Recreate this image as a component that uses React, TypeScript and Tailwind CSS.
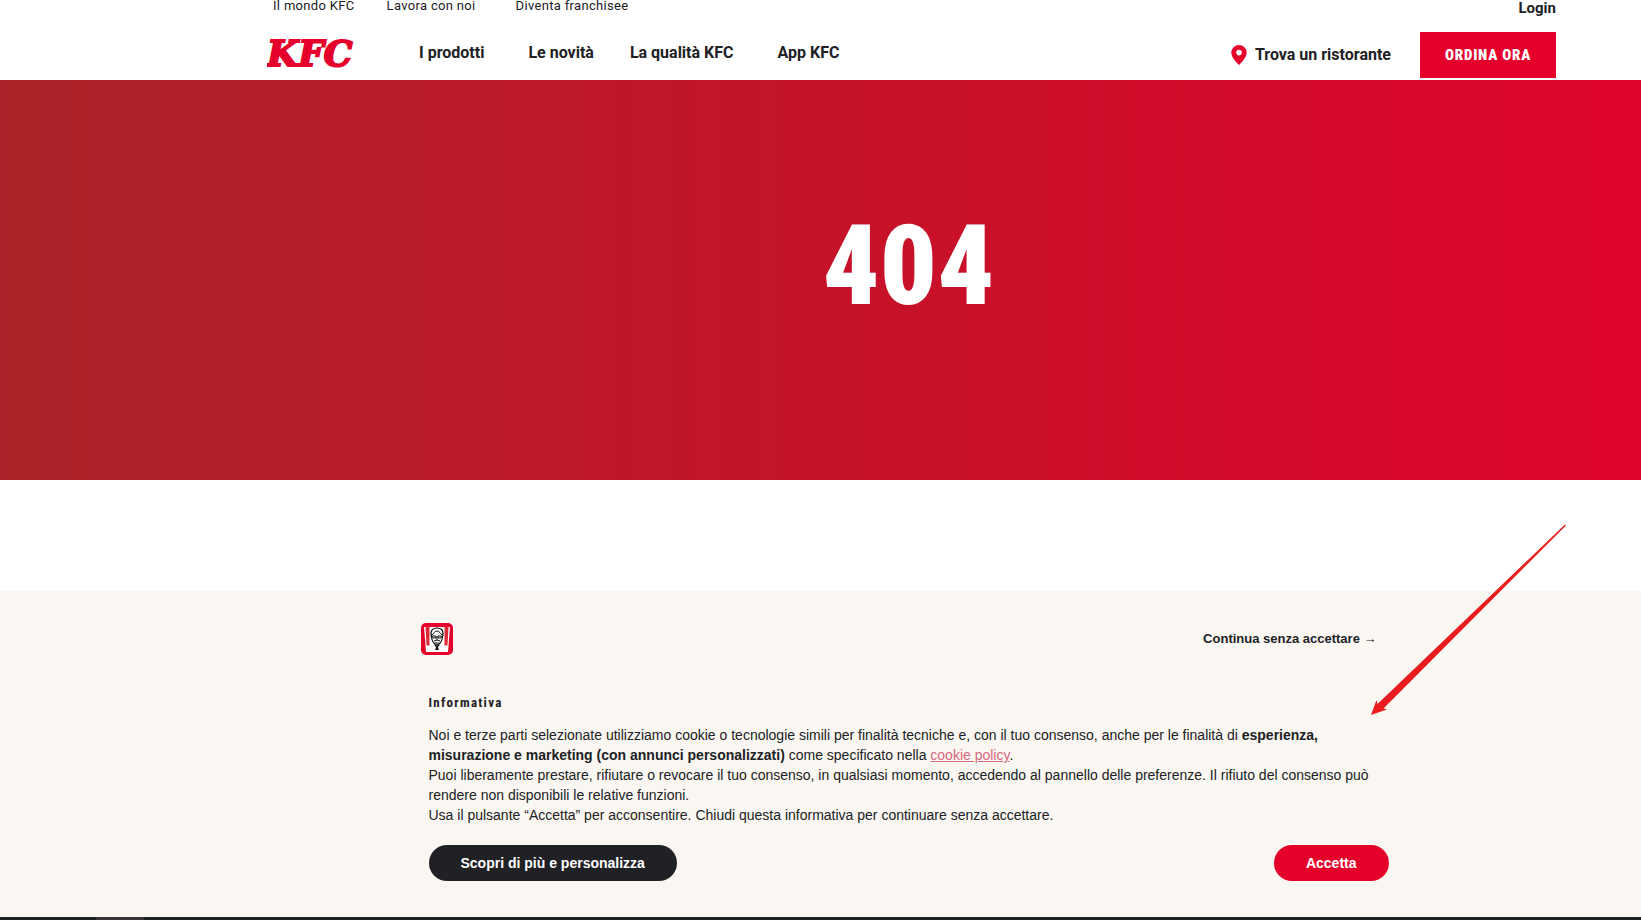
const topLinks = ["Il mondo KFC", "Lavora con noi", "Diventa franchisee"];

function Pin() {
  return (
    <svg width="16" height="20" viewBox="0 0 16 20" aria-hidden="true">
      <path
        fill="#e4002b"
        fillRule="evenodd"
        d="M8 0a7.700 7.700 0 0 1 7.700 7.700C15.700 13 8 20 8 20S.3 13 .3 7.700A7.700 7.700 0 0 1 8 0Zm0 4.800a2.800 2.800 0 1 0 0 5.600 2.800 2.800 0 0 0 0-5.600Z"
      />
    </svg>
  );
}

function Logo() {
  return (
    <svg width="90" height="32" viewBox="0 0 90 32" role="img" aria-label="KFC">
      <text
        x="0"
        y="29"
        fill="#e4002b"
        stroke="#e4002b"
        strokeWidth="2"
        className="font-['DejaVu_Serif',serif] text-[36px] font-bold italic"
      >
        KFC
      </text>
    </svg>
  );
}

function BucketIcon() {
  return (
    <svg width="32" height="32" viewBox="0 0 32 32" aria-hidden="true">
      <rect width="32" height="32" rx="5" fill="#e4002b" />
      <path d="M3 4h26l-2 25H5Z" fill="#fff" />
      <path d="M4.500 4h4v18.500h-3ZM23.500 4h4l-1 18.500h-3Z" fill="#dd2a38" />
      <path
        d="M10.500 14C9 8 11 5 16 5s7 3 5.500 9c-.5 4-2.500 7-5.500 8-3-1-5-4-5.500-8Z"
        fill="#fff"
        stroke="#111"
        strokeWidth="1.200"
      />
      <path
        d="M11 12c2-1 2-4 5-4s3 3 5.500 4M11.500 13h3.500v2h-3ZM17 13h3.500l-.5 2h-3ZM16 13v4M13 18l3-1 3 1M14 20h4"
        fill="none"
        stroke="#111"
        strokeWidth="1"
      />
      <path d="m12.500 21 3.500 1.500 3.500-1.500-2.500 3 .8 3h-3.600l.8-3Z" fill="#111" />
    </svg>
  );
}

function Header() {
  return (
    <header className="flex h-20 justify-between overflow-hidden bg-white pl-[267px] pr-[85px] text-[#202124]">
      <div className="-mt-1 flex flex-col">
        <nav className="flex gap-8 pl-1.5 text-[13px] leading-5 tracking-wide">
          {topLinks.map((label) => (
            <a key={label} href="#" className="last:ml-2">
              {label}
            </a>
          ))}
        </nav>
        <div className="mt-[21px] flex items-center">
          <a href="#">
            <Logo />
          </a>
          <nav className="ml-[62px] flex text-base font-bold">
            <a href="#">I prodotti</a>
            <a href="#" className="ml-11">Le novità</a>
            <a href="#" className="ml-9">La qualità KFC</a>
            <a href="#" className="ml-11">App KFC</a>
          </nav>
        </div>
      </div>
      <div className="-mt-1 flex flex-col items-end">
        <a href="#" className="text-[15px] font-bold leading-6">
          Login
        </a>
        <div className="mt-3 flex items-center">
          <a href="#" className="flex items-center gap-2 text-base font-bold">
            <Pin />
            <span>Trova un ristorante</span>
          </a>
          <button className="ml-[29px] h-[46px] w-[136px] bg-[#e4002b] font-['Roboto_Condensed',Roboto,sans-serif] text-[15px] font-black tracking-wider text-white">
            ORDINA ORA
          </button>
        </div>
      </div>
    </header>
  );
}

function CookieBanner() {
  return (
    <section className="bg-[#faf7f2] pb-9 pl-44 pt-8 font-['Liberation_Sans',Arial,sans-serif] text-[#202124]">
      <div className="mx-auto max-w-[960px]">
        <div className="-ml-2 flex items-center justify-between">
          <BucketIcon />
          <button className="h-8 bg-[#fbf8f4] px-3 text-[13px] font-bold">
            Continua senza accettare →
          </button>
        </div>
        <h2 className="mt-10 font-['Roboto_Condensed',Roboto,sans-serif] text-[13px] font-bold leading-4 tracking-widest">
          Informativa
        </h2>
        <p className="mt-3.5 text-sm leading-5">
          Noi e terze parti selezionate utilizziamo cookie o tecnologie simili per finalità tecniche e, con il tuo
          consenso, anche per le finalità di <b>esperienza, misurazione e marketing (con annunci personalizzati)</b> come
          specificato nella{" "}
          <a href="#" className="text-[#d8677f] underline">
            cookie policy
          </a>
          .<br />
          Puoi liberamente prestare, rifiutare o revocare il tuo consenso, in qualsiasi momento, accedendo al pannello
          delle preferenze. Il rifiuto del consenso può rendere non disponibili le relative funzioni.
          <br />
          Usa il pulsante “Accetta” per acconsentire. Chiudi questa informativa per continuare senza accettare.
        </p>
        <div className="mt-5 flex justify-between text-sm font-bold text-white">
          <button className="h-9 rounded-full bg-[#202124] px-8">Scopri di più e personalizza</button>
          <button className="h-9 rounded-full bg-[#e4002b] px-8">Accetta</button>
        </div>
      </div>
    </section>
  );
}

export default function App() {
  return (
    <div className="relative flex min-h-screen flex-col overflow-hidden bg-white font-[Roboto,sans-serif]">
      <Header />
      <main className="flex h-[400px] justify-center bg-linear-to-r/srgb from-[#ab2328] to-[#e4002b] to-110% pl-44 pt-[126px]">
        <h1 className="font-['Roboto_Condensed',Roboto,sans-serif] text-[112px] font-black leading-[120px] text-white">
          404
        </h1>
      </main>
      <div className="mt-auto">
        <CookieBanner />
        <div className="h-[3px] bg-[#202124] pl-24">
          <div className="h-full w-12 bg-[#363637]" />
        </div>
      </div>
      {/* Pointer drawn over the page */}
      <svg
        className="pointer-events-none absolute left-[1371px] top-[524px]"
        width="195"
        height="191"
        viewBox="0 0 195 191"
        aria-hidden="true"
      >
        <path d="M194 .5 195 1.500 12.500 184.500l3.500 1-16 5.500 5.500-15 1 4Z" fill="#ea1c1f" />
      </svg>
    </div>
  );
}
